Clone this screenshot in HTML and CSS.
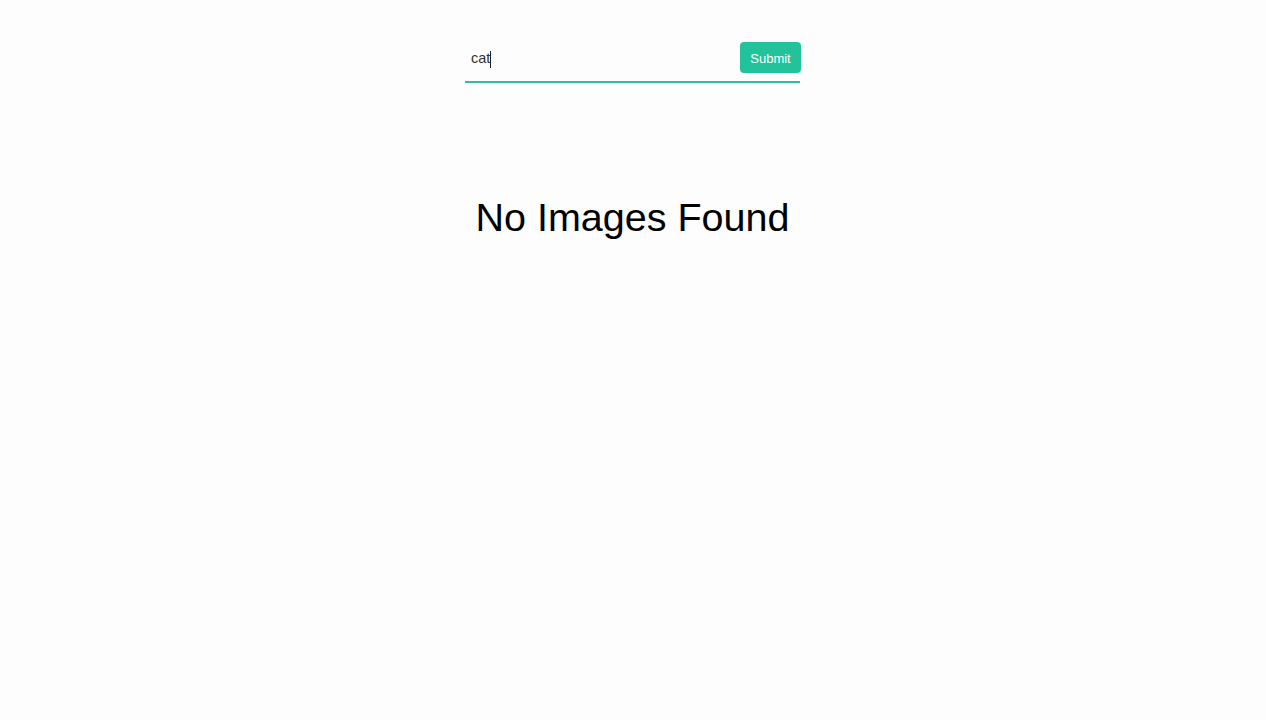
FILE: index.html
```html
<!DOCTYPE html>
<html lang="en">
<head>
<meta charset="utf-8">
<title>Image Search</title>
<link rel="stylesheet" href="styles.css">
</head>
<body>
<main class="page">
  <form class="search">
    <div class="field"><span class="value">cat</span><span class="caret"></span></div>
    <button type="button" class="submit">Submit</button>
  </form>
  <h1 class="empty">No Images Found</h1>
</main>
</body>
</html>
```
FILE: styles.css
```css
html, body {
  margin: 0;
  padding: 0;
  background: #fdfdfd;
  font-family: "Liberation Sans", Arial, sans-serif;
}
.page {
  display: flex;
  flex-direction: column;
  align-items: center;
  padding-top: 42px;
}
.search {
  width: 336px;
  display: flex;
  align-items: flex-start;
  position: relative;
}
.field {
  flex: 1;
  height: 32px;
  padding: 7px 0 0 6px;
  margin-right: 1px;
  border-bottom: 2px solid #2ebf9e;
  display: flex;
  align-items: flex-start;
  font-size: 14.5px;
  line-height: 18px;
  color: #333;
}
.caret {
  display: inline-block;
  width: 1px;
  height: 17px;
  background: #222;
  margin-top: 2px;
}
.submit {
  position: absolute;
  right: 0;
  top: 0;
  width: 61px;
  height: 31px;
  border: none;
  border-radius: 4px;
  background: #22c39a;
  color: #fff;
  font-family: "Liberation Sans", Arial, sans-serif;
  font-size: 13px;
  padding: 1px 0 0 0;
}
.empty {
  margin: 111px 0 0 -1px;
  font-size: 39.5px;
  font-weight: 400;
  color: #000;
  line-height: 1.2;
}
```
